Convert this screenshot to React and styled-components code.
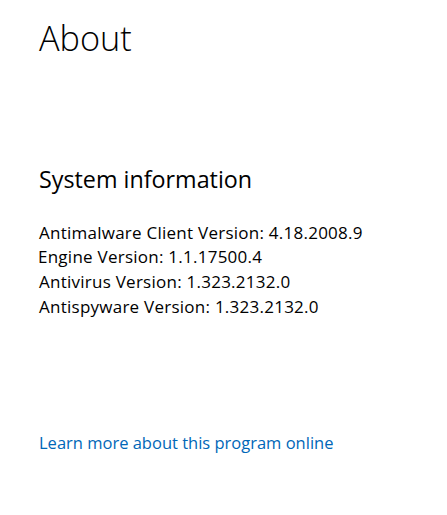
import React from 'react';
import styled, { createGlobalStyle } from 'styled-components';

const GlobalStyle = createGlobalStyle`
  html, body {
    margin: 0;
    padding: 0;
    background: #ffffff;
  }
  body {
    font-family: 'Open Sans', 'Noto Sans', sans-serif;
    color: #000000;
  }
`;

const Page = styled.main`
  width: 447px;
  height: 515px;
  box-sizing: border-box;
  padding: 15px 0 0 39px;
  display: flex;
  flex-direction: column;
  background: #ffffff;
  overflow: hidden;
`;

const Title = styled.h1`
  margin: 0;
  font-size: 34.3px;
  font-weight: 300;
  line-height: 46px;
  color: #000;
`;

const SectionTitle = styled.h2`
  margin: 102px 0 0;
  font-size: 23.3px;
  font-weight: 400;
  line-height: 32px;
  color: #000;
`;

const InfoList = styled.div`
  display: flex;
  flex-direction: column;
  margin-top: 25.5px;
`;

const InfoLine = styled.p`
  margin: 0;
  font-size: 17px;
  line-height: 24.7px;
  letter-spacing: 0.25px;
  margin-left: ${({ $shift }) => $shift || 0}px;
`;

const MoreLink = styled.a`
  margin-top: 111.5px;
  font-size: 16.5px;
  line-height: 24px;
  color: #0067b8;
  text-decoration: none;
  cursor: pointer;
`;

const lines = [
  { text: 'Antimalware Client Version: 4.18.2008.9' },
  { text: 'Engine Version: 1.1.17500.4', shift: -1 },
  { text: 'Antivirus Version: 1.323.2132.0' },
  { text: 'Antispyware Version: 1.323.2132.0' },
];

export default function App() {
  return (
    <>
      <GlobalStyle />
      <Page>
        <Title>About</Title>
        <SectionTitle>System information</SectionTitle>
        <InfoList>
          {lines.map((l) => (
            <InfoLine key={l.text} $shift={l.shift}>
              {l.text}
            </InfoLine>
          ))}
        </InfoList>
        <MoreLink>Learn more about this program online</MoreLink>
      </Page>
    </>
  );
}
